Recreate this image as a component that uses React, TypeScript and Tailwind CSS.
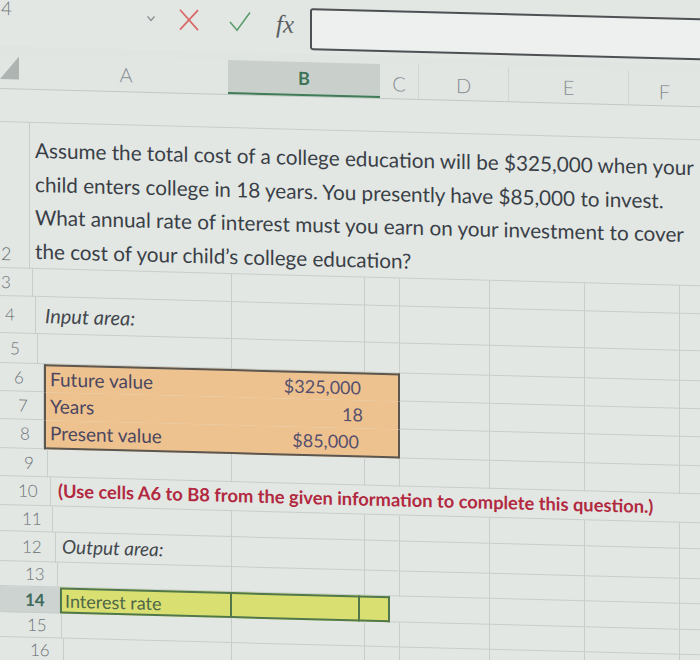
import React from 'react';

function Rest() {
  return (
    <>
      <div className="w-[133px] shrink-0 border-r border-b border-[#c7ceca]" />
      <div className="w-[35px] shrink-0 border-r border-b border-[#c7ceca]" />
      <div className="w-[90px] shrink-0 border-r border-b border-[#c7ceca]" />
      <div className="w-[95px] shrink-0 border-r border-b border-[#c7ceca]" />
      <div className="w-[95px] shrink-0 border-r border-b border-[#c7ceca]" />
      <div className="flex-1 border-b border-[#c7ceca]" />
    </>
  );
}

function RestDE() {
  return (
    <>
      <div className="w-[90px] shrink-0 border-r border-b border-[#c7ceca]" />
      <div className="w-[95px] shrink-0 border-r border-b border-[#c7ceca]" />
      <div className="w-[95px] shrink-0 border-r border-b border-[#c7ceca]" />
      <div className="flex-1 border-b border-[#c7ceca]" />
    </>
  );
}

function RowHead({ n, cls }: { n: string; cls: string }) {
  return (
    <div
      className={`shrink-0 flex items-center border-r border-b border-[#c7ceca] text-[17px] font-light text-[#6c7277] ${cls}`}
    >
      {n}
    </div>
  );
}

function EmptyRow({ n, h, hw }: { n: string; h: string; hw: string }) {
  return (
    <div className={`flex ${h}`}>
      <div className="w-[232px] shrink-0 flex">
        <RowHead n={n} cls={hw} />
        <div className="flex-1 border-r border-b border-[#c7ceca]" />
      </div>
      <Rest />
    </div>
  );
}

export default function App() {
  return (
    <div className="w-[700px] h-[660px] overflow-hidden bg-[#e2e7e4] font-['Lato',sans-serif] text-[#3b4047]">
      <div className="origin-top-left skew-y-[1.5deg] w-[700px]">
        {/* Toolbar */}
        <div className="h-[46px] flex items-start bg-[#e2e7e4]">
          <div className="w-[168px] h-[44px] flex items-start justify-between">
            <span className="ml-[1px] -mt-[6px] text-[19px] font-light text-[#6f7479]">4</span>
            <svg width="10" height="8" viewBox="0 0 10 8" className="mt-[11px] mr-[12px]">
              <path d="M1.5 1.5 L5 5.5 L8.5 1.5" fill="none" stroke="#8a9094" strokeWidth="1.4" />
            </svg>
          </div>
          <div className="flex items-start pt-[3px] h-[44px] pl-[10px]">
            <svg width="22" height="24" viewBox="0 0 22 24">
              <path d="M2 2 L20 22 M20 2 L2 22" stroke="#d96a6a" strokeWidth="1.8" fill="none" />
            </svg>
            <svg width="24" height="24" viewBox="0 0 24 24" className="ml-[28px]">
              <path d="M2 13 L9 21 L22 3" stroke="#5c9e6e" strokeWidth="1.6" fill="none" />
            </svg>
            <span className="ml-[24px] font-['Liberation_Serif',serif] italic text-[25px] text-[#5a5f63] leading-none mt-[1px]">
              fx
            </span>
          </div>
          <div className="ml-[16px] mt-0 flex-1 h-[42px] -mr-[10px] border-2 border-[#4d5154] rounded-[3px] bg-[#edf0ee]" />
        </div>
        <div className="h-[8px] bg-[#e0e5e2]" />
        {/* Column header */}
        <div className="h-[35px] flex bg-[#e1e6e3] border-b border-[#c2c9c5] text-[20px] font-light text-[#868c91]">
          <div className="w-[30px] shrink-0 flex items-start">
            <svg width="20" height="26" viewBox="0 0 20 26">
              <path d="M19 2 L19 25 L0 25 Z" fill="#aeb4b1" />
            </svg>
          </div>
          <div className="w-[198px] shrink-0 flex items-center justify-center pr-[6px]">A</div>
          <div className="w-[152px] shrink-0 flex items-center justify-center bg-[#c9d0cc] border-b-2 border-[#3f7c57] font-bold text-[#3d7356] text-[18px]">
            B
          </div>
          <div className="w-[38px] shrink-0 flex items-center justify-center pt-[4px]">C</div>
          <div className="w-[90px] shrink-0 flex items-center justify-center pt-[4px] border-l border-[#d0d6d3]">D</div>
          <div className="w-[120px] shrink-0 flex items-center justify-center pt-[2px] border-l border-[#d0d6d3]">E</div>
          <div className="flex-1 flex items-center justify-center border-l border-[#d0d6d3] pt-[6px]">F</div>
        </div>
        {/* top partial row */}
        <div className="h-[33px] flex">
          <div className="w-[28px] shrink-0 border-b border-[#c7ceca]" />
          <div className="flex-1 border-b border-[#c7ceca]" />
        </div>
        {/* merged text area (rows 1-2) */}
        <div className="h-[146px] flex">
          <div className="w-[30px] shrink-0 flex items-end pb-[0px] pl-[1px] border-r border-b border-[#c7ceca] text-[18px] font-light text-[#6c7277]">
            2
          </div>
          <div className="flex-1 border-b border-[#c7ceca] pl-[5px] pt-[11px] text-[20.7px] leading-[33.5px] whitespace-nowrap text-[#3a3f47]">
            Assume the total cost of a college education will be $325,000 when your
            <br />
            child enters college in 18 years. You presently have $85,000 to invest.
            <br />
            What annual rate of interest must you earn on your investment to cover
            <br />
            the cost of your child’s college education?
          </div>
        </div>
        <EmptyRow n="3" h="h-[28px]" hw="w-[33px] pl-[1px]" />
        {/* row 4 */}
        <div className="h-[37px] flex">
          <div className="w-[232px] shrink-0 flex">
            <RowHead n="4" cls="w-[36px] pl-[5px]" />
            <div className="flex-1 flex items-center pl-[9px] border-r border-b border-[#c7ceca] italic text-[20px] text-[#43474d]">
              Input area:
            </div>
          </div>
          <Rest />
        </div>
        <EmptyRow n="5" h="h-[30px]" hw="w-[38px] pl-[10px]" />
        {/* rows 6-8 orange */}
        <div className="h-[28px] flex">
          <div className="w-[232px] shrink-0 flex">
            <RowHead n="6" cls="w-[44px] pl-[14px]" />
            <div className="flex-1 flex items-center pl-[4px] bg-[#eec28f] border-l-2 border-t-2 border-[#5c5650] text-[19px] text-[#4b4660]">
              Future value
            </div>
          </div>
          <div className="w-[133px] shrink-0 flex items-center justify-end pr-[4px] bg-[#eec28f] border-t-2 border-[#5c5650] text-[18px] text-[#56506e]">
            $325,000
          </div>
          <div className="w-[35px] shrink-0 bg-[#eec28f] border-t-2 border-r-2 border-[#5c5650]" />
          <RestDE />
        </div>
        <div className="h-[28px] flex">
          <div className="w-[232px] shrink-0 flex">
            <RowHead n="7" cls="w-[44px] pl-[18px]" />
            <div className="flex-1 flex items-center pl-[4px] bg-[#eec28f] border-l-2 border-[#5c5650] text-[19px] text-[#4b4660]">
              Years
            </div>
          </div>
          <div className="w-[133px] shrink-0 flex items-center justify-end pr-[2px] bg-[#eec28f] text-[18px] text-[#56506e]">
            18
          </div>
          <div className="w-[35px] shrink-0 bg-[#eec28f] border-r-2 border-[#5c5650]" />
          <RestDE />
        </div>
        <div className="h-[29px] flex">
          <div className="w-[232px] shrink-0 flex">
            <RowHead n="8" cls="w-[44px] pl-[20px]" />
            <div className="flex-1 flex items-center pl-[4px] bg-[#eec28f] border-l-2 border-b-2 border-[#5c5650] text-[19px] text-[#4b4660]">
              Present value
            </div>
          </div>
          <div className="w-[133px] shrink-0 flex items-center justify-end pr-[6px] bg-[#eec28f] border-b-2 border-[#5c5650] text-[18px] text-[#56506e]">
            $85,000
          </div>
          <div className="w-[35px] shrink-0 bg-[#eec28f] border-b-2 border-r-2 border-[#5c5650]" />
          <RestDE />
        </div>
        <EmptyRow n="9" h="h-[28px]" hw="w-[48px] pl-[24px]" />
        {/* row 10 */}
        <div className="h-[29px] flex">
          <RowHead n="10" cls="w-[51px] pl-[18px]" />
          <div className="flex-1 flex items-center pl-[7px] border-b border-[#c7ceca] whitespace-nowrap font-bold text-[18.3px] text-[#b2293f]">
            (Use cells A6 to B8 from the given information to complete this question.)
          </div>
        </div>
        <EmptyRow n="11" h="h-[26px]" hw="w-[53px] pl-[22px]" />
        {/* row 12 */}
        <div className="h-[30px] flex">
          <div className="w-[232px] shrink-0 flex">
            <RowHead n="12" cls="w-[56px] pl-[22px]" />
            <div className="flex-1 flex items-center pl-[6px] border-r border-b border-[#c7ceca] italic text-[19px] text-[#43474d]">
              Output area:
            </div>
          </div>
          <Rest />
        </div>
        <EmptyRow n="13" h="h-[25px]" hw="w-[58px] pl-[25px]" />
        {/* row 14 */}
        <div className="h-[26px] flex">
          <div className="w-[232px] shrink-0 flex">
            <div className="w-[60px] shrink-0 flex items-center pl-[25px] bg-[#cdd3d0] border-r border-b border-[#c7ceca] text-[17px] font-bold text-[#3f6a5c]">
              14
            </div>
            <div className="flex-1 flex items-center pl-[3px] bg-[#dadf72] border-2 border-[#51784a] text-[18px] text-[#4e6747]">
              Interest rate
            </div>
          </div>
          <div className="w-[128px] shrink-0 bg-[#dadf72] border-y-2 border-r-2 border-[#51784a]" />
          <div className="w-[30px] shrink-0 bg-[#dadf72] border-y-2 border-r-2 border-[#51784a]" />
          <div className="w-[10px] shrink-0 border-b border-[#c7ceca]" />
          <RestDE />
        </div>
        <EmptyRow n="15" h="h-[25px]" hw="w-[62px] pl-[27px]" />
        <EmptyRow n="16" h="h-[24px]" hw="w-[64px] pl-[30px]" />
        <EmptyRow n="17" h="h-[26px]" hw="w-[66px] pl-[32px]" />
      </div>
    </div>
  );
}
